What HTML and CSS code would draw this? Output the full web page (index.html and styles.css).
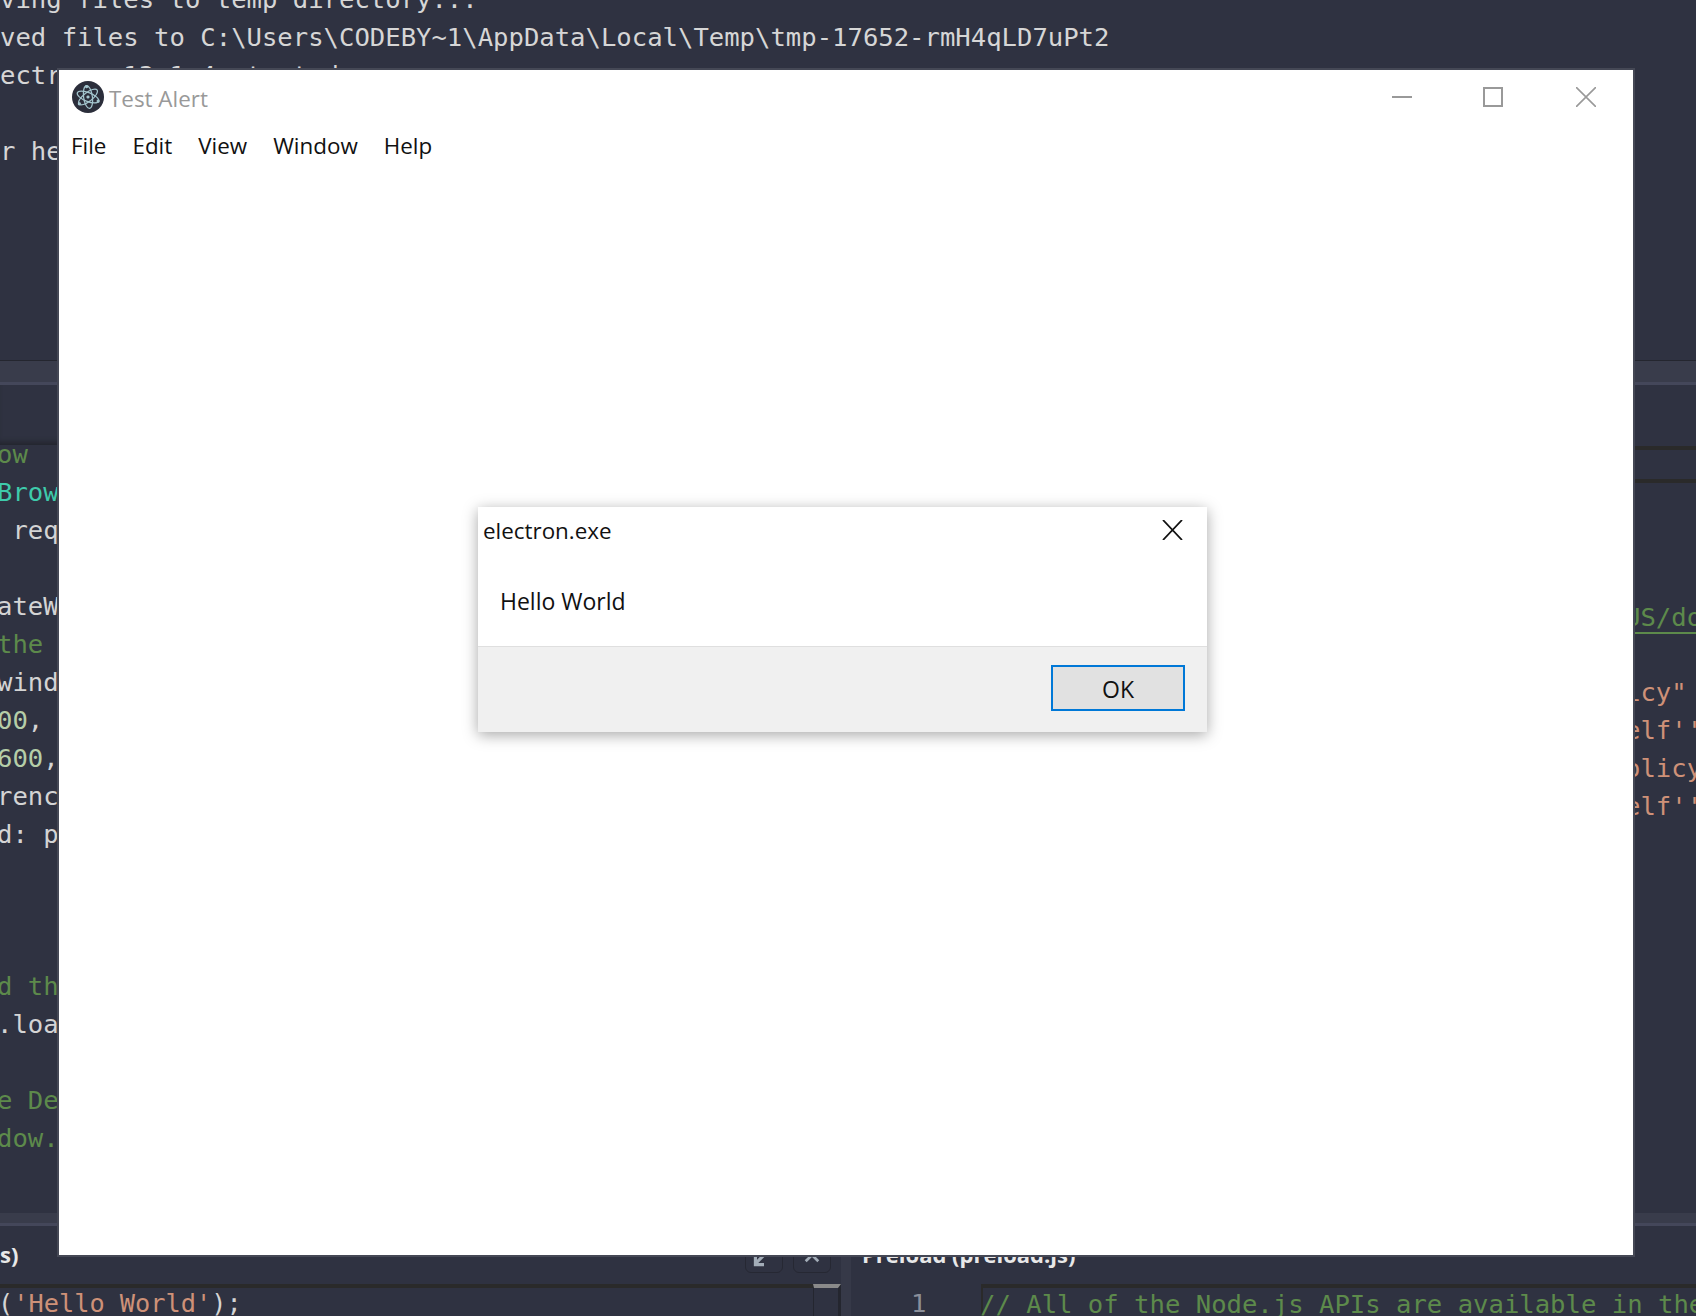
FILE: index.html
```
<!DOCTYPE html>
<html lang="en">
<head>
<meta charset="utf-8">
<title>Test Alert</title>
<link rel="stylesheet" href="styles.css">
</head>
<body>
<div class="app">
  <section class="terminal">
    <div class="line">ving files to temp directory...</div>
    <div class="line">ved files to C:\Users\CODEBY~1\AppData\Local\Temp\tmp-17652-rmH4qLD7uPt2</div>
    <div class="line">ectron v13.1.4 started.</div>
    <div class="line">&nbsp;</div>
    <div class="line">r he</div>
  </section>
  <div class="split-bar tall"></div>
  <section class="editors upper">
    <div class="pane">
      <div class="pane-head"></div>
      <div class="code code-left">
        <div class="line c-comment">ow</div>
        <div class="line c-type">Brow</div>
        <div class="line"> req</div>
        <div class="line">&nbsp;</div>
        <div class="line">ateWi</div>
        <div class="line c-comment">the</div>
        <div class="line">windo</div>
        <div class="line c-num">00<span class="c-plain">,</span></div>
        <div class="line c-num">600<span class="c-plain">,</span></div>
        <div class="line">rence</div>
        <div class="line">d: p</div>
        <div class="line">&nbsp;</div>
        <div class="line">&nbsp;</div>
        <div class="line">&nbsp;</div>
        <div class="line c-comment">d th</div>
        <div class="line">.load</div>
        <div class="line">&nbsp;</div>
        <div class="line c-comment">e De</div>
        <div class="line c-comment">dow.</div>
      </div>
    </div>
    <div class="gutter-bar"></div>
    <div class="pane">
      <div class="pane-head right"></div>
      <div class="tab-strip"></div>
      <div class="code code-right">
        <div class="line c-link"><u>US/do</u></div>
        <div class="line">&nbsp;</div>
        <div class="line c-str">icy"</div>
        <div class="line c-str">elf''</div>
        <div class="line c-str">olicy</div>
        <div class="line c-str">elf''</div>
      </div>
    </div>
  </section>
  <div class="split-bar short"></div>
  <section class="editors lower">
    <div class="pane">
      <div class="lower-head">
        <span class="head-title">s)</span>
        <div class="head-tools">
          <span class="tool tool-arrow"><svg viewBox="0 0 14 14" width="16" height="16"><path d="M12 2 3 11M3 4.5V12h7.5" fill="none" stroke="#a3adb8" stroke-width="2.8"/></svg></span>
          <span class="tool tool-close"><svg viewBox="0 0 14 14" width="16" height="16"><path d="M1.5 1.5l11 11M12.5 1.5l-11 11" fill="none" stroke="#a3adb8" stroke-width="2.4"/></svg></span>
        </div>
      </div>
      <div class="lower-body">
        <div class="lower-code"><div class="line">(<span class="c-str">'Hello World'</span>);</div></div>
        <div class="minimap"></div>
      </div>
    </div>
    <div class="gutter-bar"></div>
    <div class="pane">
      <div class="lower-head preload-head"><span class="head-title">Preload (preload.js)</span></div>
      <div class="lower-body">
        <div class="line-no"><div class="line">1</div></div>
        <div class="preload-code"><div class="line c-comment">// All of the Node.js APIs are available in the preload process.</div></div>
      </div>
    </div>
  </section>
</div>

<div class="window">
  <header class="titlebar">
    <svg class="logo" viewBox="0 0 32 32" width="32" height="32">
      <circle cx="16" cy="16" r="16" fill="#2b2e3b"/>
      <g transform="rotate(-8 16 16)">
        <g fill="none" stroke="#a4c6cf" stroke-width="1.2">
          <ellipse cx="16" cy="16" rx="11.5" ry="4.4" transform="rotate(30 16 16)"/>
          <ellipse cx="16" cy="16" rx="11.5" ry="4.4" transform="rotate(90 16 16)"/>
          <ellipse cx="16" cy="16" rx="11.5" ry="4.4" transform="rotate(150 16 16)"/>
        </g>
        <g fill="#a4c6cf">
          <circle cx="16" cy="16" r="1.6"/>
          <circle cx="16" cy="5.5" r="1.6"/>
          <circle cx="6.5" cy="21.5" r="1.6"/>
          <circle cx="25.5" cy="21.5" r="1.6"/>
        </g>
      </g>
    </svg>
    <span class="win-title">Test Alert</span>
    <div class="win-controls">
      <svg viewBox="0 0 20 20" width="20" height="20"><path d="M0 10h20" stroke="#999" stroke-width="2"/></svg>
      <svg viewBox="0 0 20 20" width="20" height="20"><path d="M1 1h18v18H1z" fill="none" stroke="#999" stroke-width="2"/></svg>
      <svg class="win-close" viewBox="0 0 20 20" width="20" height="20"><path d="M0 0l20 20M20 0 0 20" stroke="#999" stroke-width="1.6"/></svg>
    </div>
  </header>
  <nav class="menubar">
    <span>File</span><span>Edit</span><span>View</span><span>Window</span><span>Help</span>
  </nav>
  <div class="dialog">
    <div class="dialog-head">
      <span>electron.exe</span>
      <svg viewBox="0 0 21 20" width="21" height="20"><path d="M1 0l19 20M20 0 1 20" stroke="#111" stroke-width="1.8"/></svg>
    </div>
    <div class="dialog-body">Hello World</div>
    <div class="dialog-foot"><button class="ok" type="button">OK</button></div>
  </div>
</div>
</body>
</html>
```

FILE: styles.css
```
* { box-sizing: border-box; }
html, body { margin: 0; height: 100%; overflow: hidden; }
body {
  position: relative;
  width: 1696px;
  height: 1316px;
  background: #2f3241;
  color: #d4d4d4;
  font-family: "DejaVu Sans Mono", monospace;
  font-size: 25.6px;
}
.line { height: 38px; line-height: 38px; white-space: pre; }
.app { display: flex; flex-direction: column; height: 1316px; }
.terminal { height: 360px; overflow: hidden; color: #d6d6d6; flex: none; }
.terminal .line:first-child { margin-top: -20px; }

.split-bar { flex: none; background: #393c4b; border-top: 1px solid #24262f; border-bottom: 3px solid #44475a; }
.split-bar.tall { height: 25px; }
.split-bar.short { height: 13px; border-top: 0; }

.editors { display: grid; grid-template-columns: 841px 10px 1fr; flex: none; }
.upper { height: 828px; }
.lower { height: 90px; }
.gutter-bar { background: #363948; }
.pane { min-width: 0; overflow: hidden; }

.pane-head { height: 60px; background: #2f3241; box-shadow: inset 0 -6px 5px -3px #23252e; }
.pane-head.right { box-shadow: inset 0 -4px 0 #2a2a2a; height: 65px; }
.tab-strip { height: 33px; border-bottom: 4px solid #2a2a2a; }

.code-left { height: 760px; margin: -10px 0 0 -3px; }
.code-right { padding-left: 774px; padding-top: 115px; }
.code-right .c-link { margin-bottom: -1px; }
.c-comment { color: #5d8a4b; }
.c-link { color: #5d8a4b; }
.c-link u { text-decoration-thickness: 2px; text-underline-offset: 6px; }
.c-type { color: #3ecbab; }
.c-num { color: #b5cea8; }
.c-plain { color: #d4d4d4; }
.c-str { color: #ce9178; }

.lower-head {
  height: 58px;
  display: flex;
  align-items: center;
  justify-content: space-between;
  font-family: "Open Sans", sans-serif;
  font-weight: 700;
  color: #e8e8e8;
  font-size: 22px;
}
.head-title { padding-bottom: 2px; }
.preload-head { padding-left: 11px; }
.head-tools { display: flex; gap: 10px; align-self: flex-end; padding-right: 10px; margin-bottom: 11px; }
.tool {
  width: 38px;
  height: 38px;
  border: 1px solid #262833;
  border-radius: 6px;
  display: flex;
  align-items: flex-end;
  justify-content: center;
}
.tool-arrow { padding: 0 8px 5px 0; }
.tool-close { padding-bottom: 9px; }
.lower-body { display: flex; border-top: 4px solid #2a2a2a; height: 32px; }
.pane:last-child .lower-body { border-top: 0; }
.lower-code { width: 813px; flex: none; margin: -3px 0 0 -2px; font-size: 25.3px; }
.minimap { width: 28px; flex: none; border-top: 4px solid #8a8a8a; margin: -4px 0 0 2px; border-left: 1px solid #24262f; border-right: 3px solid #24262f; }
.line-no { width: 130px; flex: none; color: #8b8f9a; padding-left: 60px; }
.preload-code { flex: 1; border-top: 4px solid #2a2a2a; border-left: 2px solid #2a2a2a; }
.preload-code .line { margin: -3px 0 0 -3px; }

.window {
  position: absolute;
  left: 59px;
  top: 70px;
  width: 1574px;
  height: 1185px;
  background: #fff;
  box-shadow: 0 0 0 2px #454855;
  color: #111;
  font-family: "Open Sans", sans-serif;
  font-size: 22.4px;
}
.titlebar { height: 56px; display: flex; align-items: center; padding-left: 13px; }
.logo { flex: none; margin-top: -2px; }
.win-title { margin-left: 5px; color: #999; }
.win-controls { margin-left: auto; display: flex; gap: 71px; padding-right: 37px; margin-top: -3px; }
.win-close { margin-left: 2px; }
.menubar { display: flex; gap: 26px; padding-left: 12px; height: 40px; line-height: 40px; }

.dialog {
  position: absolute;
  left: 419px;
  top: 437px;
  width: 729px;
  height: 225px;
  background: #fff;
  box-shadow: 0 3px 14px rgba(0, 0, 0, .35);
  display: flex;
  flex-direction: column;
}
.dialog-head { height: 48px; display: flex; align-items: center; justify-content: space-between; padding: 0 24px 2px 5px; }
.dialog-body { height: 91px; padding: 22px 0 0 22px; line-height: 48px; font-size: 23px; }
.dialog-foot {
  flex: 1;
  background: #f0f0f0;
  border-top: 1px solid #dfdfdf;
  display: flex;
  justify-content: flex-end;
  align-items: flex-start;
  padding: 18px 22px 0 0;
}
.ok {
  width: 134px;
  height: 46px;
  background: #e1e1e1;
  border: 2px solid #0078d7;
  font: inherit;
  font-size: 23px;
  color: #111;
  padding: 2px 0 0;
}
```
